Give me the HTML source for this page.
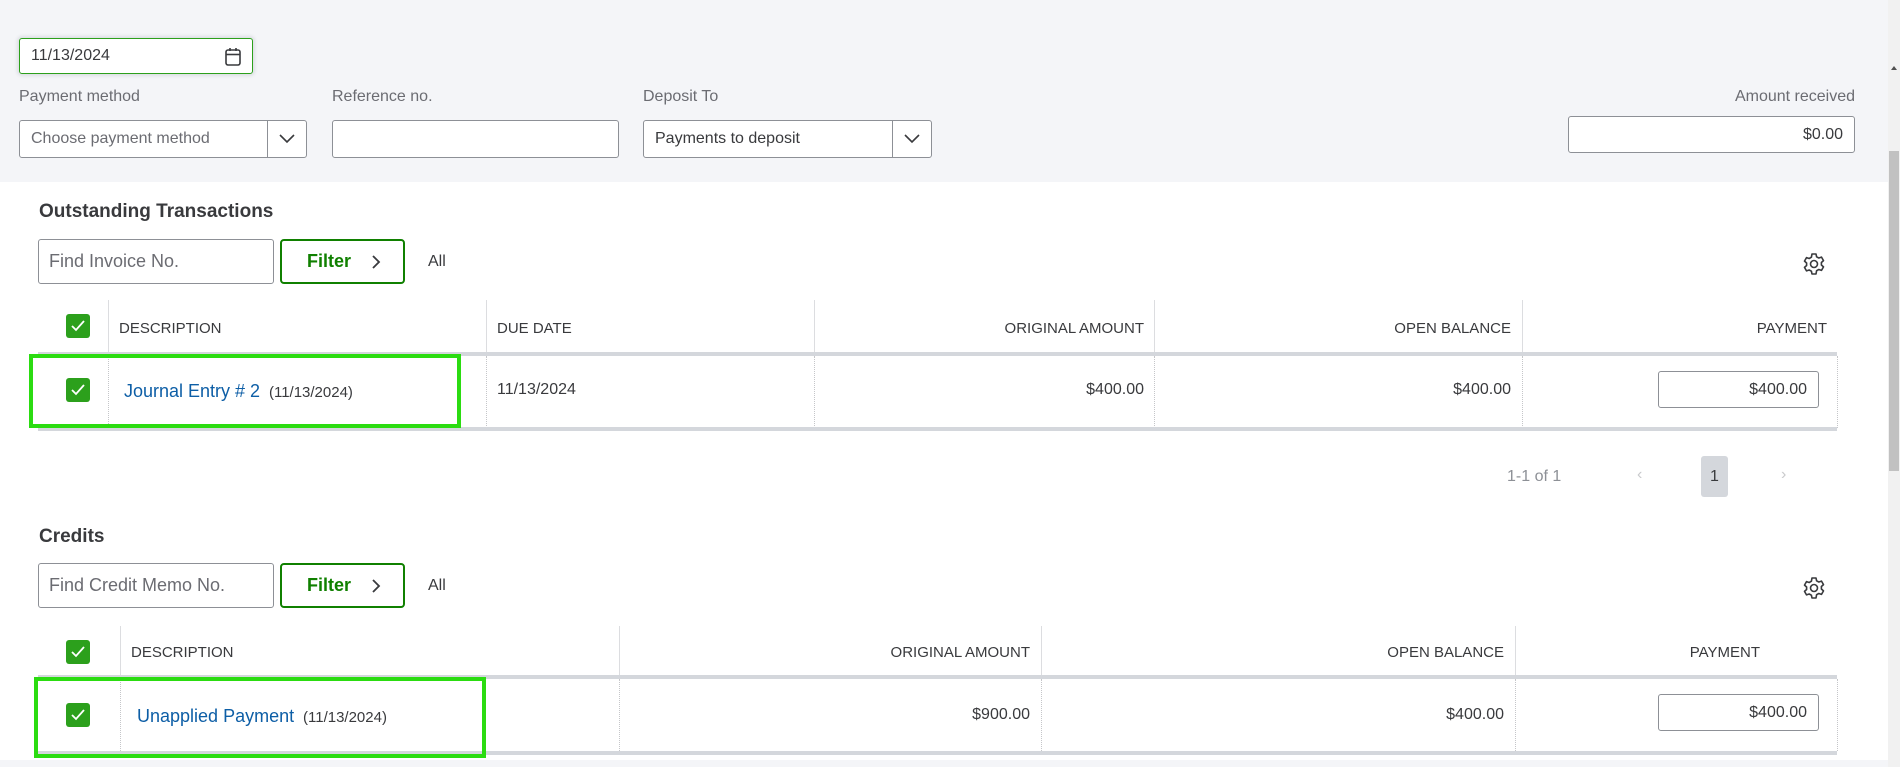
<!DOCTYPE html>
<html><head><style>
*{box-sizing:border-box;margin:0;padding:0}
body{width:1900px;height:767px;overflow:hidden;background:#fff;font-family:"Liberation Sans",sans-serif;color:#393a3d;position:relative}
.a{position:absolute}
.top{left:0;top:0;width:1888px;height:182px;background:#f4f5f8}
.inp{position:absolute;background:#fff;border:1px solid #8d9096;border-radius:3px;font-size:16px;color:#393a3d;display:flex;align-items:center;padding:0 11px}
.lbl{position:absolute;font-size:16px;color:#6b6c72}
.dd{position:absolute;top:0;bottom:0;right:38px;border-left:1px solid #8d9096}
.chev{position:absolute;right:11px;top:50%;margin-top:-5px}
h2{position:absolute;font-size:19px;font-weight:bold;color:#393a3d}
.btn{position:absolute;border:2px solid #108000;border-radius:4px;color:#108000;font-weight:bold;font-size:18px;display:flex;align-items:center;padding-left:25px;background:#fff}
.all{position:absolute;font-size:16px;color:#393a3d}
.cb{position:absolute;width:24px;height:24px;background:#2ca01c;border-radius:3px}
.cb svg{position:absolute;left:4px;top:5px}
.th{position:absolute;font-size:15px;color:#393a3d}
.vl{position:absolute;width:0;border-left:1px solid #dcdde0}
.vd{position:absolute;width:0;border-left:1px dotted #c5c6c9}
.hl{position:absolute;height:4px;background:#d4d7dc}
.td{position:absolute;font-size:16px;color:#393a3d}
.lnk{color:#0d5ea6;font-size:18px}
.sm{font-size:15px;color:#393a3d}
.box{position:absolute;border:4px solid #2bdc11}
</style></head><body>
<div class="a top"></div>
<div class="a" style="left:1888px;top:0;width:12px;height:767px;background:#f1f1f1"></div>
<div class="a" style="left:1889px;top:151px;width:10px;height:320px;background:#c1c1c1"></div>
<div class="a" style="left:1891px;top:66px;width:0;height:0;border-left:3px solid transparent;border-right:3px solid transparent;border-bottom:4px solid #505050"></div>

<div class="inp" style="left:19px;top:38px;width:234px;height:36px;border-color:#2ca01c;box-shadow:0 0 3px 2px #dcdfe3">11/13/2024
<svg class="a" style="right:10px;top:8px" width="18" height="20" viewBox="0 0 18 20"><rect x="2" y="3" width="14" height="15" rx="2" fill="none" stroke="#393a3d" stroke-width="1.6"/><line x1="2" y1="7.5" x2="16" y2="7.5" stroke="#393a3d" stroke-width="1.6"/><line x1="6" y1="1" x2="6" y2="4" stroke="#393a3d" stroke-width="1.6"/><line x1="12" y1="1" x2="12" y2="4" stroke="#393a3d" stroke-width="1.6"/></svg></div>

<div class="lbl" style="left:19px;top:88px">Payment method</div>
<div class="lbl" style="left:332px;top:88px">Reference no.</div>
<div class="lbl" style="left:643px;top:88px">Deposit To</div>
<div class="lbl" style="left:1600px;top:88px;width:1255px;text-align:right;left:600px">Amount received</div>

<div class="inp" style="left:19px;top:120px;width:288px;height:38px;color:#6b6c72">Choose payment method<div class="dd"></div><svg class="chev" width="16" height="10"><path d="M1 1l7 7 7-7" fill="none" stroke="#393a3d" stroke-width="1.6"/></svg></div>
<div class="inp" style="left:332px;top:120px;width:287px;height:38px"></div>
<div class="inp" style="left:643px;top:120px;width:289px;height:38px">Payments to deposit<div class="dd"></div><svg class="chev" width="16" height="10"><path d="M1 1l7 7 7-7" fill="none" stroke="#393a3d" stroke-width="1.6"/></svg></div>
<div class="inp" style="left:1568px;top:116px;width:287px;height:37px;justify-content:flex-end">$0.00</div>

<!-- Outstanding -->
<h2 style="left:39px;top:201px">Outstanding Transactions</h2>
<div class="inp" style="left:38px;top:239px;width:236px;height:45px;font-size:18px;color:#6b6c72;padding-left:10px">Find Invoice No.</div>
<div class="btn" style="left:280px;top:239px;width:125px;height:45px">Filter<svg class="a" style="left:89px;top:14px" width="10" height="14"><path d="M2 1l6 6-6 6" fill="none" stroke="#393a3d" stroke-width="1.8"/></svg></div>
<div class="all" style="left:428px;top:253px">All</div>
<svg class="a" style="left:1802px;top:251px" width="24" height="26" viewBox="0 0 24 24"><path d="M10 2h4l.6 2.8 2.2 1.2 2.7-.9 2 3.5-2.1 1.9v2.5l2.1 1.9-2 3.5-2.7-.9-2.2 1.2L14 22h-4l-.6-2.8-2.2-1.2-2.7.9-2-3.5 2.1-1.9V11L2.5 9.1l2-3.5 2.7.9L9.4 5.2z" fill="none" stroke="#393a3d" stroke-width="1.6" stroke-linejoin="round"/><circle cx="12" cy="12" r="3.5" fill="none" stroke="#393a3d" stroke-width="1.6"/></svg>

<div class="cb" style="left:66px;top:314px"><svg width="16" height="14"><path d="M2 7l4 4 8-9" fill="none" stroke="#fff" stroke-width="1.8"/></svg></div>
<div class="vl" style="left:108px;top:300px;height:54px"></div>
<div class="vl" style="left:486px;top:300px;height:54px"></div>
<div class="vl" style="left:814px;top:300px;height:54px"></div>
<div class="vl" style="left:1154px;top:300px;height:54px"></div>
<div class="vl" style="left:1522px;top:300px;height:54px"></div>
<div class="th" style="left:119px;top:320px">DESCRIPTION</div>
<div class="th" style="left:497px;top:320px">DUE DATE</div>
<div class="th" style="left:814px;top:320px;width:330px;text-align:right">ORIGINAL AMOUNT</div>
<div class="th" style="left:1154px;top:320px;width:357px;text-align:right">OPEN BALANCE</div>
<div class="th" style="left:1522px;top:320px;width:305px;text-align:right">PAYMENT</div>
<div class="hl" style="left:38px;top:352px;width:1799px"></div>
<div class="vd" style="left:108px;top:356px;height:72px"></div>
<div class="vd" style="left:486px;top:356px;height:72px"></div>
<div class="vd" style="left:814px;top:356px;height:72px"></div>
<div class="vd" style="left:1154px;top:356px;height:72px"></div>
<div class="vd" style="left:1522px;top:356px;height:72px"></div>
<div class="vd" style="left:1837px;top:356px;height:72px"></div>
<div class="cb" style="left:66px;top:378px"><svg width="16" height="14"><path d="M2 7l4 4 8-9" fill="none" stroke="#fff" stroke-width="1.8"/></svg></div>
<div class="td" style="left:124px;top:381px"><span class="lnk">Journal Entry # 2</span>&nbsp; <span class="sm">(11/13/2024)</span></div>
<div class="td" style="left:497px;top:381px">11/13/2024</div>
<div class="td" style="left:814px;top:381px;width:330px;text-align:right">$400.00</div>
<div class="td" style="left:1154px;top:381px;width:357px;text-align:right">$400.00</div>
<div class="inp" style="left:1658px;top:371px;width:161px;height:37px;justify-content:flex-end">$400.00</div>
<div class="hl" style="left:38px;top:427px;width:1799px"></div>
<div class="box" style="left:29px;top:354px;width:432px;height:74px"></div>

<div class="td" style="left:1507px;top:468px;color:#8d9096">1-1 of 1</div>
<div class="td" style="left:1637px;top:466px;color:#c9cacc">‹</div>
<div class="a" style="left:1701px;top:456px;width:27px;height:41px;background:#d4d7dc;border-radius:3px;font-size:16px;text-align:center;line-height:41px">1</div>
<div class="td" style="left:1781px;top:466px;color:#c9cacc">›</div>

<!-- Credits -->
<h2 style="left:39px;top:526px">Credits</h2>
<div class="inp" style="left:38px;top:563px;width:236px;height:45px;font-size:18px;color:#6b6c72;padding-left:10px">Find Credit Memo No.</div>
<div class="btn" style="left:280px;top:563px;width:125px;height:45px">Filter<svg class="a" style="left:89px;top:14px" width="10" height="14"><path d="M2 1l6 6-6 6" fill="none" stroke="#393a3d" stroke-width="1.8"/></svg></div>
<div class="all" style="left:428px;top:577px">All</div>
<svg class="a" style="left:1802px;top:575px" width="24" height="26" viewBox="0 0 24 24"><path d="M10 2h4l.6 2.8 2.2 1.2 2.7-.9 2 3.5-2.1 1.9v2.5l2.1 1.9-2 3.5-2.7-.9-2.2 1.2L14 22h-4l-.6-2.8-2.2-1.2-2.7.9-2-3.5 2.1-1.9V11L2.5 9.1l2-3.5 2.7.9L9.4 5.2z" fill="none" stroke="#393a3d" stroke-width="1.6" stroke-linejoin="round"/><circle cx="12" cy="12" r="3.5" fill="none" stroke="#393a3d" stroke-width="1.6"/></svg>

<div class="cb" style="left:66px;top:640px"><svg width="16" height="14"><path d="M2 7l4 4 8-9" fill="none" stroke="#fff" stroke-width="1.8"/></svg></div>
<div class="vl" style="left:120px;top:626px;height:51px"></div>
<div class="vl" style="left:619px;top:626px;height:51px"></div>
<div class="vl" style="left:1041px;top:626px;height:51px"></div>
<div class="vl" style="left:1515px;top:626px;height:51px"></div>
<div class="th" style="left:131px;top:644px">DESCRIPTION</div>
<div class="th" style="left:619px;top:644px;width:411px;text-align:right">ORIGINAL AMOUNT</div>
<div class="th" style="left:1041px;top:644px;width:463px;text-align:right">OPEN BALANCE</div>
<div class="th" style="left:1515px;top:644px;width:245px;text-align:right">PAYMENT</div>
<div class="hl" style="left:38px;top:675px;width:1799px"></div>
<div class="vd" style="left:120px;top:679px;height:72px"></div>
<div class="vd" style="left:619px;top:679px;height:72px"></div>
<div class="vd" style="left:1041px;top:679px;height:72px"></div>
<div class="vd" style="left:1515px;top:679px;height:72px"></div>
<div class="vd" style="left:1837px;top:679px;height:72px"></div>
<div class="cb" style="left:66px;top:703px"><svg width="16" height="14"><path d="M2 7l4 4 8-9" fill="none" stroke="#fff" stroke-width="1.8"/></svg></div>
<div class="td" style="left:137px;top:706px"><span class="lnk">Unapplied Payment</span>&nbsp; <span class="sm">(11/13/2024)</span></div>
<div class="td" style="left:619px;top:706px;width:411px;text-align:right">$900.00</div>
<div class="td" style="left:1041px;top:706px;width:463px;text-align:right">$400.00</div>
<div class="inp" style="left:1658px;top:694px;width:161px;height:37px;justify-content:flex-end">$400.00</div>
<div class="hl" style="left:38px;top:751px;width:1799px"></div>
<div class="box" style="left:34px;top:677px;width:452px;height:81px"></div>
<div class="a" style="left:0;top:760px;width:1888px;height:7px;background:#f4f5f8"></div>
</body></html>
